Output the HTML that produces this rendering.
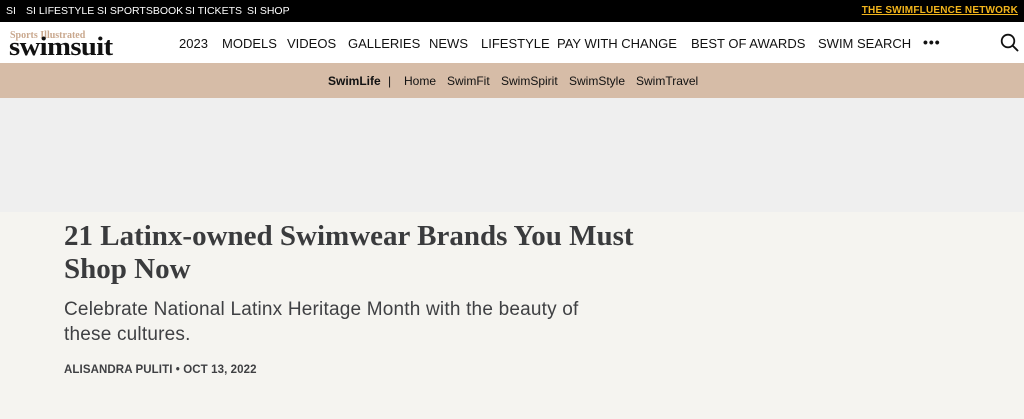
<!DOCTYPE html>
<html><head><meta charset="utf-8"><style>
*{margin:0;padding:0;box-sizing:border-box}
body{width:1024px;height:419px;overflow:hidden;font-family:"Liberation Sans",sans-serif;background:#f5f4f0;position:relative}
.top{position:absolute;left:0;top:0;width:1024px;height:22px;background:#000;color:#fff;font-size:10.5px}
.top span{position:absolute;top:5px}
.top .r{right:6px;color:#f2b51c;text-decoration:underline;font-weight:bold;font-size:10px;letter-spacing:0.2px}
.nav{position:absolute;top:22px;left:0;width:1024px;height:41px;background:#fff}
.nav .item{position:absolute;top:14px;font-size:13px;color:#111}
.logo1{position:absolute;left:10px;top:8px;font-family:"Liberation Serif",serif;font-weight:bold;font-size:10px;color:#c9a88e}
.logo2{position:absolute;left:9px;top:10px;font-family:"Liberation Serif",serif;font-weight:bold;font-size:26px;color:#111;letter-spacing:-0.5px;transform:scaleX(1.1);transform-origin:left}
.sub{position:absolute;top:63px;left:0;width:1024px;height:35px;background:#d6bca7;font-size:12px;color:#111}
.sub span{position:absolute;top:11px}
.ad{position:absolute;top:98px;left:0;width:1024px;height:114px;background:#efefef}
h1{position:absolute;left:64px;top:220px;width:600px;font-family:"Liberation Serif",serif;font-weight:bold;font-size:29px;line-height:33px;color:#3a3b3d}
.dek{position:absolute;left:64px;top:297px;width:540px;font-size:19px;line-height:25px;color:#3f4043;letter-spacing:0.2px}
.by{position:absolute;left:64px;top:364px;font-size:11.5px;color:#3f4043;font-weight:bold;letter-spacing:0.1px}
</style></head><body>
<div class="top">
<span style="left:6px">SI</span><span style="left:26px">SI LIFESTYLE</span><span style="left:97px">SI SPORTSBOOK</span><span style="left:185px">SI TICKETS</span><span style="left:247px">SI SHOP</span>
<span class="r">THE SWIMFLUENCE NETWORK</span>
</div>
<div class="nav">
<div class="logo1">Sports Illustrated</div>
<div class="logo2">swimsuit</div>
<span class="item" style="left:179px">2023</span>
<span class="item" style="left:222px">MODELS</span>
<span class="item" style="left:287px">VIDEOS</span>
<span class="item" style="left:348px">GALLERIES</span>
<span class="item" style="left:429px">NEWS</span>
<span class="item" style="left:481px">LIFESTYLE</span>
<span class="item" style="left:557px">PAY WITH CHANGE</span>
<span class="item" style="left:691px">BEST OF AWARDS</span>
<span class="item" style="left:818px">SWIM SEARCH</span>
<span class="item" style="left:923px;top:12px;font-weight:bold;font-size:14px;letter-spacing:1px">•••</span>
<svg style="position:absolute;left:1000px;top:11px" width="19" height="19" viewBox="0 0 19 19"><circle cx="8" cy="8" r="6.3" fill="none" stroke="#111" stroke-width="1.8"/><line x1="12.5" y1="12.5" x2="17.5" y2="17.5" stroke="#111" stroke-width="1.9" stroke-linecap="round"/></svg>
</div>
<div class="sub">
<span style="left:328px;font-weight:bold">SwimLife</span><span style="left:388px">|</span>
<span style="left:404px">Home</span><span style="left:447px">SwimFit</span><span style="left:501px">SwimSpirit</span><span style="left:569px">SwimStyle</span><span style="left:636px">SwimTravel</span>
</div>
<div class="ad"></div>
<h1>21 Latinx-owned Swimwear Brands You Must Shop Now</h1>
<div class="dek">Celebrate National Latinx Heritage Month with the beauty of these cultures.</div>
<div class="by">ALISANDRA PULITI • OCT 13, 2022</div>
</body></html>
